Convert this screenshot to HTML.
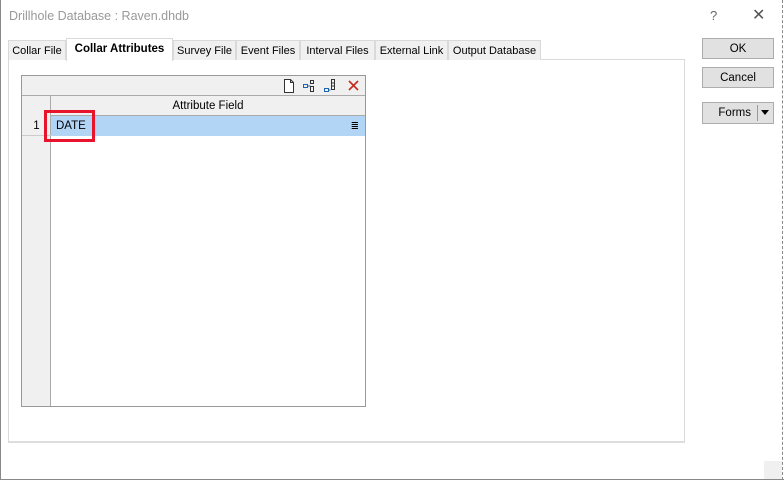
<!DOCTYPE html><html><head><style>
*{margin:0;padding:0;box-sizing:border-box}
body{width:784px;height:480px;background:#fff;font-family:"Liberation Sans",sans-serif;font-size:11.5px;color:#000;position:relative;overflow:hidden}
.a{position:absolute}
.tab{position:absolute;top:40px;height:20px;background:#f0f0f0;border:1px solid #d9d9d9;border-bottom:none;text-align:center;line-height:20px;font-size:11px}
.btn{position:absolute;left:702px;width:72px;background:#e1e1e1;border:1px solid #adadad;text-align:center}
</style></head><body>
<div class="a" style="left:0;top:0;width:1px;height:480px;background:#888"></div>
<div class="a" style="left:782px;top:0;width:1px;height:480px;border-left:1px dashed #888"></div>
<div class="a" style="left:0;top:479px;width:784px;height:1px;background:#888"></div>
<div class="a" style="left:9px;top:9px;font-size:12.5px;color:#999">Drillhole Database : Raven.dhdb</div>
<div class="a" style="left:710px;top:8px;font-size:13px;color:#666">?</div>
<div class="a" style="left:752px;top:5px;font-size:16px;color:#555">✕</div>
<div class="a" style="left:8px;top:59px;width:677px;height:384px;border:1px solid #d9d9d9;border-bottom:2px solid #ddd;background:#fff"></div>
<div class="tab" style="left:8px;width:58px">Collar File</div>
<div class="tab" style="left:173px;width:63px">Survey File</div>
<div class="tab" style="left:236px;width:64px">Event Files</div>
<div class="tab" style="left:300px;width:75px">Interval Files</div>
<div class="tab" style="left:375px;width:73px">External Link</div>
<div class="tab" style="left:448px;width:93px">Output Database</div>
<div class="tab" style="left:66px;top:38px;width:107px;height:23px;background:#fff;font-weight:bold;font-size:11.5px;line-height:21px">Collar Attributes</div>
<div class="a" style="left:21px;top:75px;width:345px;height:332px;border:1px solid #999;background:#fff"></div>
<div class="a" style="left:22px;top:76px;width:343px;height:20px;background:#f0f0f0;border-bottom:1px solid #aaa"></div>
<div class="a" style="left:22px;top:96px;width:29px;height:310px;background:#f0f0f0;border-right:1px solid #aaa"></div>
<div class="a" style="left:51px;top:96px;width:314px;height:20px;background:#f0f0f0;border-bottom:1px solid #aaa;text-align:center;line-height:20px">Attribute Field</div>
<div class="a" style="left:22px;top:116px;width:29px;height:20px;border-bottom:1px solid #ccc;text-align:center;line-height:21px">1</div>
<div class="a" style="left:51px;top:116px;width:314px;height:20px;background:#b3d5f5;line-height:21px;padding-left:5px">DATE<span style="position:absolute;right:6px;font-size:10px">≣</span></div>
<div class="a" style="left:44px;top:110px;width:51px;height:32px;border:3px solid #e8142b"></div>
<svg class="a" style="left:280px;top:77px" width="85" height="18">
<path d="M4.5 2.5h6l3 3v10h-9z M10.5 2.5v3h3" fill="#fff" stroke="#333"/>
<rect x="23.5" y="7.5" width="4" height="3" fill="none" stroke="#1e64b4"/><path d="M27.5 9h3" stroke="#1e64b4"/>
<rect x="30.5" y="3.5" width="3" height="3" fill="none" stroke="#333"/><rect x="30.5" y="9.5" width="3" height="5" fill="none" stroke="#333"/>
<rect x="44.5" y="11.5" width="4" height="3" fill="none" stroke="#1e64b4"/><path d="M48.5 13h2" stroke="#1e64b4"/>
<rect x="51.5" y="2.5" width="3" height="10" fill="none" stroke="#333"/><path d="M51.5 6h3M51.5 9h3" stroke="#333"/>
<path d="M69 4l9 9M78 4l-9 9" stroke="#c42b1c" stroke-width="1.6"/>
</svg>
<div class="btn" style="top:38px;height:21px;line-height:20px">OK</div>
<div class="btn" style="top:67px;height:21px;line-height:20px">Cancel</div>
<div class="btn" style="top:102px;height:22px;line-height:21px;text-align:right;padding-right:22px">Forms</div>
<div class="a" style="left:757px;top:105px;width:1px;height:16px;background:#999"></div>
<div class="a" style="left:761px;top:110px;width:0;height:0;border-left:4px solid transparent;border-right:4px solid transparent;border-top:5px solid #000"></div>
<div class="a" style="left:764px;top:461px;width:18px;height:18px;background:#f0f0f0"></div>
</body></html>
